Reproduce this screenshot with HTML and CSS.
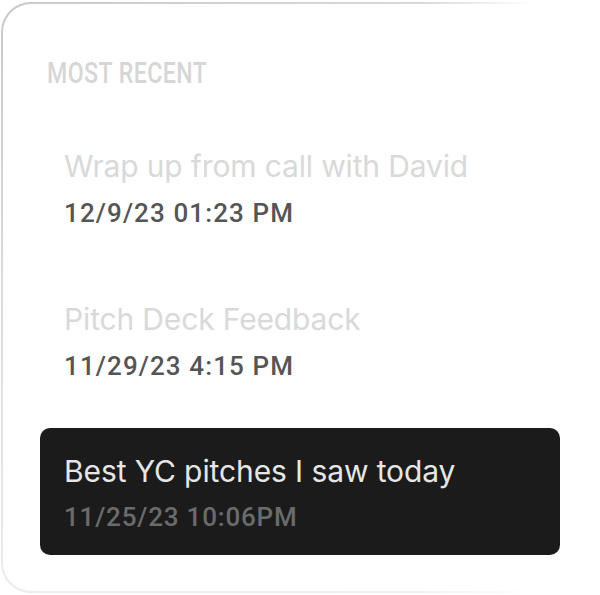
FILE: index.html
```html
<!DOCTYPE html>
<html>
<head>
<meta charset="utf-8">
<link rel="stylesheet" href="styles.css">
</head>
<body>
<div class="card">
  <div class="heading"><span class="heading-text">MOST RECENT</span></div>
  <div class="list">
    <div class="item">
      <div class="title">Wrap up from call with David</div>
      <div class="date">12/9/23 01:23 PM</div>
    </div>
    <div class="item">
      <div class="title">Pitch Deck Feedback</div>
      <div class="date">11/29/23 4:15 PM</div>
    </div>
    <div class="item active">
      <div class="title">Best YC pitches I saw today</div>
      <div class="date">11/25/23 10:06PM</div>
    </div>
  </div>
</div>
</body>
</html>
```
FILE: styles.css
```css
html, body {
  margin: 0;
  padding: 0;
  background: #fff;
  overflow: hidden;
}
.card {
  box-sizing: border-box;
  margin: 2px 0 0 1px;
  width: 599px;
  height: 591px;
  border: 2px solid transparent;
  border-right-width: 0;
  border-radius: 30px 0 0 30px;
  background:
    linear-gradient(#fff, #fff) padding-box,
    linear-gradient(to bottom, rgba(255,255,255,0) 0%, rgba(255,255,255,0.65) 100%) border-box,
    linear-gradient(to right, #c9c9c9 0%, #d8d8d8 70%, #ffffff 89%) border-box;
  padding: 53px 0 0 37px;
}
.heading {
  font-family: Roboto, "Liberation Sans", sans-serif;
  font-weight: 500;
  font-size: 29px;
  line-height: 32px;
  color: #d6d6d6;
  margin-left: 7px;
}
.heading-text {
  display: inline-block;
  letter-spacing: 0.5px;
  transform: scaleX(0.8);
  transform-origin: left center;
}
.list {
  display: flex;
  flex-direction: column;
  gap: 25.5px;
  margin-top: 34px;
  width: 520px;
}
.item {
  border-radius: 10px;
  padding: 23px 24px 0;
  height: 127px;
  box-sizing: border-box;
}
.title {
  font-family: Inter, "Noto Sans", sans-serif;
  font-size: 30px;
  line-height: 40px;
  color: #d9d9d9;
  letter-spacing: -0.15px;
}
.date {
  font-family: Roboto, "Liberation Sans", sans-serif;
  font-weight: 500;
  font-size: 26px;
  line-height: 32px;
  letter-spacing: 1.1px;
  color: #555;
  margin-top: 11px;
}
.item.active {
  background: #1b1b1b;
}
.item.active .title {
  color: #e6e6e6;
  letter-spacing: -0.1px;
}
.item.active .date {
  color: #6b6b6b;
  letter-spacing: 0.8px;
  margin-top: 10px;
}
```
